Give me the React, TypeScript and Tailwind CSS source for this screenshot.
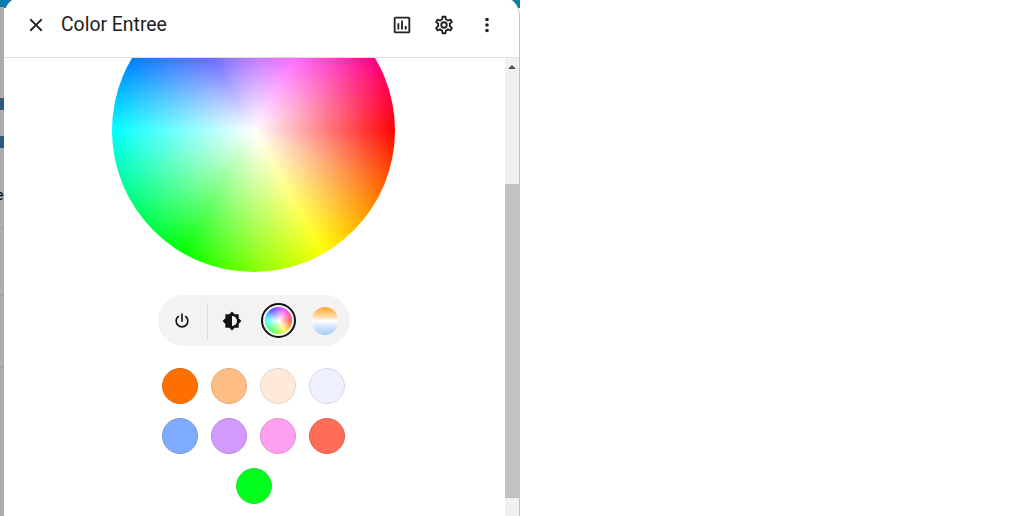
const presets = [
  [
    { bg: 'bg-[#ff6f00]', border: 'border-[#d9660f]' },
    { bg: 'bg-[#ffbc85]', border: 'border-[#e0aa80]' },
    { bg: 'bg-[#ffe9d8]', border: 'border-[#e6d6c8]' },
    { bg: 'bg-[#eef0fd]', border: 'border-[#d8dae8]' },
  ],
  [
    { bg: 'bg-[#80acff]', border: 'border-[#6f96df]' },
    { bg: 'bg-[#d59aff]', border: 'border-[#b786dd]' },
    { bg: 'bg-[#ff9ff0]', border: 'border-[#e08fd4]' },
    { bg: 'bg-[#ff6c57]', border: 'border-[#d9604f]' },
  ],
];

function Swatch({ bg, border }: { bg: string; border: string }) {
  return <div className={`w-9 h-9 rounded-full border ${bg} ${border}`} />;
}

function Icon({ d, size = 21, color = '#212121' }: { d: string; size?: number; color?: string }) {
  return (
    <svg width={size} height={size} viewBox="0 0 24 24" fill={color} className="shrink-0">
      <path d={d} />
    </svg>
  );
}

const closePath =
  'M19,6.41L17.59,5L12,10.59L6.41,5L5,6.41L10.59,12L5,17.59L6.41,19L12,13.41L17.59,19L19,17.59L13.41,12L19,6.41Z';
const chartPath =
  'M9,17H7V10H9V17M13,17H11V7H13V17M17,17H15V13H17V17M19,19H5V5H19V19.1M19,3H5C3.9,3 3,3.9 3,5V19C3,20.1 3.9,21 5,21H19C20.1,21 21,20.1 21,19V5C21,3.9 20.1,3 19,3Z';
const cogPath =
  'M12,8A4,4 0 0,1 16,12A4,4 0 0,1 12,16A4,4 0 0,1 8,12A4,4 0 0,1 12,8M12,10A2,2 0 0,0 10,12A2,2 0 0,0 12,14A2,2 0 0,0 14,12A2,2 0 0,0 12,10M10,22C9.75,22 9.54,21.82 9.5,21.58L9.13,18.93C8.5,18.68 7.96,18.34 7.44,17.94L4.95,18.95C4.73,19.03 4.46,18.95 4.34,18.73L2.34,15.27C2.21,15.05 2.27,14.78 2.46,14.63L4.57,12.97L4.5,12L4.57,11L2.46,9.37C2.27,9.22 2.21,8.95 2.34,8.73L4.34,5.27C4.46,5.05 4.73,4.96 4.95,5.05L7.44,6.05C7.96,5.66 8.5,5.32 9.13,5.07L9.5,2.42C9.54,2.18 9.75,2 10,2H14C14.25,2 14.46,2.18 14.5,2.42L14.87,5.07C15.5,5.32 16.04,5.66 16.56,6.05L19.05,5.05C19.27,4.96 19.54,5.05 19.66,5.27L21.66,8.73C21.79,8.95 21.73,9.22 21.54,9.37L19.43,11L19.5,12L19.43,13L21.54,14.63C21.73,14.78 21.79,15.05 21.66,15.27L19.66,18.73C19.54,18.95 19.27,19.04 19.05,18.95L16.56,17.95C16.04,18.34 15.5,18.68 14.87,18.93L14.5,21.58C14.46,21.82 14.25,22 14,22H10M11.25,4L10.88,6.61C9.68,6.86 8.62,7.5 7.85,8.39L5.44,7.35L4.69,8.65L6.8,10.2C6.4,11.37 6.4,12.64 6.8,13.8L4.68,15.36L5.43,16.66L7.86,15.62C8.63,16.5 9.68,17.14 10.87,17.38L11.24,20H12.76L13.13,17.39C14.32,17.14 15.37,16.5 16.14,15.62L18.57,16.66L19.32,15.36L17.2,13.81C17.6,12.64 17.6,11.37 17.2,10.2L19.31,8.65L18.56,7.35L16.15,8.39C15.38,7.5 14.32,6.86 13.12,6.62L12.75,4H11.25Z';
const dotsPath =
  'M12,16A2,2 0 0,1 14,18A2,2 0 0,1 12,20A2,2 0 0,1 10,18A2,2 0 0,1 12,16M12,10A2,2 0 0,1 14,12A2,2 0 0,1 12,14A2,2 0 0,1 10,12A2,2 0 0,1 12,10M12,4A2,2 0 0,1 14,6A2,2 0 0,1 12,8A2,2 0 0,1 10,6A2,2 0 0,1 12,4Z';
const powerPath =
  'M16.56,5.44L15.11,6.89C16.84,7.94 18,9.83 18,12A6,6 0 0,1 12,18A6,6 0 0,1 6,12C6,9.83 7.16,7.94 8.88,6.88L7.44,5.44C5.36,6.88 4,9.28 4,12A8,8 0 0,0 12,20A8,8 0 0,0 20,12C20,9.28 18.64,6.88 16.56,5.44M13,3H11V13H13';
const brightnessPath =
  'M12,18V6A6,6 0 0,1 18,12A6,6 0 0,1 12,18M20,15.31L23.31,12L20,8.69V4H15.31L12,0.69L8.69,4H4V8.69L0.69,12L4,15.31V20H8.69L12,23.31L15.31,20H20V15.31Z';

export default function App() {
  return (
    <div className="w-[1024px] h-[516px] flex bg-white overflow-hidden font-['Roboto',sans-serif]">
      <div className="w-[520px] h-full relative">
        {/* page behind the dialog */}
        <div className="absolute top-0 left-0 w-full h-[8px] bg-[#0b7cab]" />
        <div className="absolute top-[7px] bottom-0 left-0 w-1 bg-[#adadad] overflow-hidden">
          <div className="absolute top-[91px] left-0 w-full h-3 bg-[#2a5a80]" />
          <div className="absolute top-[129px] left-0 w-full h-3 bg-[#2a5a80]" />
          <span className="absolute top-[180px] left-[-4px] text-[14px] leading-4 text-black">e</span>
          <div className="absolute top-[221px] left-0 w-full h-px bg-[#a0a0a0]" />
          <div className="absolute top-[288px] left-0 w-full h-px bg-[#a0a0a0]" />
          <div className="absolute top-[360px] left-0 w-full h-px bg-[#a0a0a0]" />
        </div>
        <div className="relative ml-1 mt-[-4px] w-[516px] h-[520px] bg-white rounded-t-[20px] border-r border-[#c4c4c4] flex flex-col">
          <header className="h-[62px] shrink-0 flex items-center pl-[21px] pr-[21.5px] pb-[3px] border-b border-[#e0e0e0]">
            <Icon d={closePath} size={22} />
            <h1 className="ml-[14px] text-[19.4px] text-[#212121] flex-1">Color Entree</h1>
            <div className="flex items-center gap-[20.5px]">
              <Icon d={chartPath} size={22} />
              <Icon d={cogPath} size={22} />
              <Icon d={dotsPath} size={22} />
            </div>
          </header>
          <div className="flex-1 flex min-h-0">
            <main className="flex-1 flex flex-col items-center pr-[2px] overflow-hidden">
              <div className="w-[283px] h-[283px] shrink-0 rounded-full mt-[-69px] bg-[radial-gradient(closest-side,#ffffff_0%,rgba(255,255,255,0)_100%),conic-gradient(from_30deg,#ff00ff,#ff0000,#ffff00,#00ff00,#00ffff,#0000ff,#ff00ff)]" />
              <div className="mt-[23px] w-[192px] h-[51px] shrink-0 rounded-full bg-[#f3f3f3] flex items-center pl-[14px]">
                <Icon d={powerPath} size={20} color="#141414" />
                <div className="ml-[15px] w-px h-9 bg-[#dcdcdc]" />
                <div className="ml-[14.5px]">
                  <Icon d={brightnessPath} size={20} color="#141414" />
                </div>
                <div className="ml-[18.5px] w-[35px] h-[35px] rounded-full border-2 border-[#141414] p-[2px]">
                  <div className="w-full h-full rounded-full bg-[radial-gradient(circle,#ffffff_0%,rgba(255,255,255,0)_100%),conic-gradient(from_30deg,#ff00ff,#ff0000,#ffff00,#00ff00,#00ffff,#0000ff,#ff00ff)]" />
                </div>
                <div className="ml-4 w-[26px] h-[28px] rounded-full bg-[linear-gradient(#ffa726_0%,#ffd9a0_32%,#ffffff_50%,#d6e8ff_68%,#a6ccf5_100%)]" />
              </div>
              <div className="mt-[21.5px] flex flex-col gap-[14.25px] w-[184px]">
                {presets.map((row, i) => (
                  <div key={i} className="flex justify-between">
                    {row.map((s, j) => (
                      <Swatch key={j} bg={s.bg} border={s.border} />
                    ))}
                  </div>
                ))}
                <div className="flex justify-center">
                  <Swatch bg="bg-[#00ff1a]" border="border-[#33dd44]" />
                </div>
              </div>
            </main>
            <aside className="w-[14px] shrink-0 bg-[#f1f1f1] flex flex-col">
              <div className="h-[126px] flex justify-center pt-[7px]">
                <div className="w-0 h-0 border-x-[4px] border-x-transparent border-b-[4px] border-b-[#505050]" />
              </div>
              <div className="h-[314px] bg-[#c1c1c1]" />
            </aside>
          </div>
        </div>
      </div>
      <div className="flex-1 bg-white" />
    </div>
  );
}
